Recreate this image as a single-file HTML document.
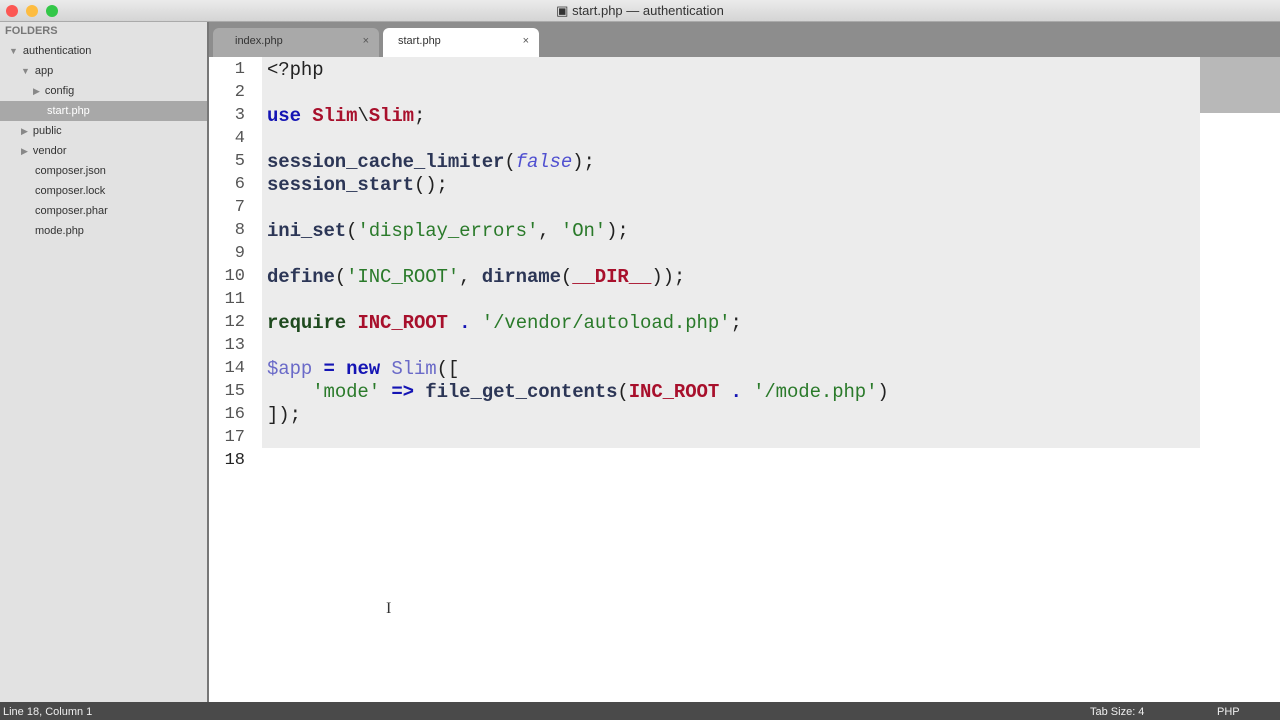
<!DOCTYPE html>
<html><head><meta charset="utf-8"><style>
*{margin:0;padding:0;box-sizing:border-box}
body{width:1280px;height:720px;overflow:hidden;background:#fff;font-family:"Liberation Sans",sans-serif;position:relative}
#title{position:absolute;left:0;top:0;width:1280px;height:22px;background:linear-gradient(#ebebeb,#d4d4d4);border-bottom:1px solid #aaa;text-align:center;font-size:13px;line-height:22px;color:#333}
.dot{position:absolute;top:5px;width:12px;height:12px;border-radius:50%}
#side{position:absolute;left:0;top:22px;width:209px;height:680px;background:#e2e2e2;border-right:2px solid #777}
.it{position:absolute;font-size:11px;color:#333;height:20px;line-height:20px}
.sel{background:#a8a8a8;color:#fff;left:0;width:207px;padding-left:47px}
.tri{color:#888;font-size:9px;margin-right:5px}
#tabs{position:absolute;left:209px;top:22px;width:1071px;height:35px;background:#8d8d8d}
.tab{position:absolute;top:6px;height:29px;border-radius:6px 6px 0 0;font-size:11px;line-height:26px;padding-left:22px;color:#333}
#gut{position:absolute;left:209px;top:57px;width:53px;height:645px;background:#fff}
#code{position:absolute;left:262px;top:57px;width:938px;height:391px;background:#ececec}
.ln{position:absolute;left:209px;width:36px;text-align:right;font-family:"Liberation Mono",monospace;font-size:17px;color:#555;margin-top:2px}
.cl{position:absolute;left:267px;font-family:"Liberation Mono",monospace;font-size:19px;white-space:pre;color:#222;letter-spacing:-0.1px;margin-top:2px}
.k{color:#1414b4;font-weight:bold}.r{color:#a8102c;font-weight:bold}.f{color:#2c3656;font-weight:bold}.s{color:#2a7a2a}.v{color:#6a6ac8}.q{color:#1e4a1e;font-weight:bold}.b{color:#5050d0;font-style:italic}
#status{position:absolute;left:0;top:702px;width:1280px;height:18px;background:#4a4a4a;color:#eee;font-size:11px;line-height:20px}
#mini{position:absolute;left:1200px;top:57px;width:80px;height:56px;background:#b8b8b8}
</style></head><body>
<div id="title"><span class="dot" style="left:6px;background:#fc5753"></span><span class="dot" style="left:26px;background:#fdbc40"></span><span class="dot" style="left:46px;background:#33c748"></span>▣ start.php — authentication</div>
<div id="side">
<div class="it" style="left:5px;top:-1px;color:#777;font-weight:bold">FOLDERS</div>
<div class="it" style="left:9px;top:19px"><span class="tri">▼</span>authentication</div>
<div class="it" style="left:21px;top:39px"><span class="tri">▼</span>app</div>
<div class="it" style="left:33px;top:59px"><span class="tri">▶</span>config</div>
<div class="it sel" style="top:79px">start.php</div>
<div class="it" style="left:21px;top:99px"><span class="tri">▶</span>public</div>
<div class="it" style="left:21px;top:119px"><span class="tri">▶</span>vendor</div>
<div class="it" style="left:35px;top:139px">composer.json</div>
<div class="it" style="left:35px;top:159px">composer.lock</div>
<div class="it" style="left:35px;top:179px">composer.phar</div>
<div class="it" style="left:35px;top:199px">mode.php</div>
</div>
<div id="tabs">
<div class="tab" style="left:4px;width:166px;background:#a9a9a9">index.php<span style="position:absolute;right:10px;color:#555">×</span></div>
<div class="tab" style="left:174px;width:156px;background:#fff;padding-left:15px">start.php<span style="position:absolute;right:10px;color:#555">×</span></div>
</div>
<div id="gut"></div><div id="code"></div><div id="mini"></div>
<div class="ln" style="top:58px">1</div><div class="cl" style="top:57px">&lt;?php</div>
<div class="ln" style="top:81px">2</div>
<div class="ln" style="top:104px">3</div><div class="cl" style="top:103px"><span class="k">use</span> <span class="r">Slim</span>\<span class="r">Slim</span>;</div>
<div class="ln" style="top:127px">4</div>
<div class="ln" style="top:150px">5</div><div class="cl" style="top:149px"><span class="f">session_cache_limiter</span>(<span class="b">false</span>);</div>
<div class="ln" style="top:173px">6</div><div class="cl" style="top:172px"><span class="f">session_start</span>();</div>
<div class="ln" style="top:196px">7</div>
<div class="ln" style="top:219px">8</div><div class="cl" style="top:218px"><span class="f">ini_set</span>(<span class="s">'display_errors'</span>, <span class="s">'On'</span>);</div>
<div class="ln" style="top:242px">9</div>
<div class="ln" style="top:265px">10</div><div class="cl" style="top:264px"><span class="f">define</span>(<span class="s">'INC_ROOT'</span>, <span class="f">dirname</span>(<span class="r">__DIR__</span>));</div>
<div class="ln" style="top:288px">11</div>
<div class="ln" style="top:311px">12</div><div class="cl" style="top:310px"><span class="q">require</span> <span class="r">INC_ROOT</span> <span class="k">.</span> <span class="s">'/vendor/autoload.php'</span>;</div>
<div class="ln" style="top:334px">13</div>
<div class="ln" style="top:357px">14</div><div class="cl" style="top:356px"><span class="v">$app</span> <span class="k">=</span> <span class="k">new</span> <span class="v">Slim</span>([</div>
<div class="ln" style="top:380px">15</div><div class="cl" style="top:379px">    <span class="s">'mode'</span> <span class="k">=&gt;</span> <span class="f">file_get_contents</span>(<span class="r">INC_ROOT</span> <span class="k">.</span> <span class="s">'/mode.php'</span>)</div>
<div class="ln" style="top:403px">16</div><div class="cl" style="top:402px">]);</div>
<div class="ln" style="top:426px">17</div>
<div class="ln" style="top:449px;color:#222">18</div>
<div style="position:absolute;left:386px;top:600px;font-size:16px;color:#333;font-family:'Liberation Serif',serif">I</div>
<div id="status"><span style="position:absolute;left:3px">Line 18, Column 1</span><span style="position:absolute;left:1090px">Tab Size: 4</span><span style="position:absolute;left:1217px">PHP</span></div>
</body></html>
